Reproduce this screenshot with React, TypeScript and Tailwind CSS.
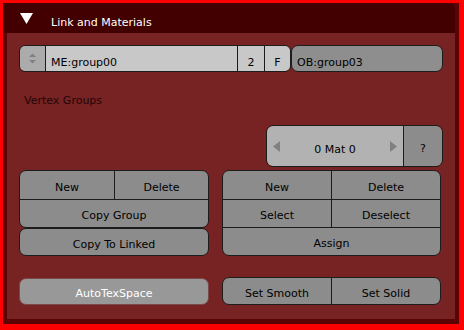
import React from "react";

const font = { fontFamily: '"DejaVu Sans", Verdana, sans-serif' };

function Cell({ children, className = "" }: { children?: React.ReactNode; className?: string }) {
  return (
    <div className={`flex items-center justify-center pt-[6px] text-[11px] text-black ${className}`}>
      {children}
    </div>
  );
}

export default function App() {
  return (
    <div
      className="w-[464px] h-[330px] bg-[#5c0303] border-t-[3px] border-l-[3px] border-r-[5px] border-b-[6px] border-[#ff0000] flex flex-col overflow-hidden"
      style={font}
    >
      {/* Header */}
      <div className="h-[30px] shrink-0 mr-[4px] bg-[#420000] rounded-tr-[6px] flex items-center">
        <svg className="ml-[17px] w-[13px] h-[12px]" viewBox="0 0 13 12">
          <polygon points="0,1 13,1 6.5,12" fill="#ffffff" />
        </svg>
        <span className="ml-[18px] pt-[11px] text-[11px] text-white">Link and Materials</span>
      </div>

      {/* Body */}
      <div className="flex-1 mx-[4px] bg-[#772323] flex flex-col pl-[12px] pt-[12px]">
        {/* Row 1 */}
        <div className="flex h-[27px]">
          <div className="flex h-full border border-[#1c1c1c] rounded-[6px] overflow-hidden">
            <div className="w-[25px] bg-[#ababab] flex items-center justify-center">
              <svg className="w-[9px] h-[11px]" viewBox="0 0 9 11">
                <polygon points="1,4 8,4 4.5,0.5" fill="#808080" />
                <polygon points="1,7 8,7 4.5,10.5" fill="#808080" />
              </svg>
            </div>
            <div className="w-[192px] bg-[#c8c8c8] border-l border-[#1c1c1c] flex items-center pl-[5px] pt-[10px] text-[11px] text-black">
              ME:group00
            </div>
            <Cell className="w-[27px] bg-[#c8c8c8] border-l border-[#1c1c1c] !pt-[10px]">2</Cell>
            <Cell className="w-[26px] bg-[#c8c8c8] border-l border-[#1c1c1c] !pt-[10px]">F</Cell>
          </div>
          <div className="w-[152px] h-full bg-[#8e8e8e] border border-[#1c1c1c] rounded-[7px] flex items-center pl-[5px] pt-[10px] text-[11px] text-black">
            OB:group03
          </div>
        </div>

        {/* Vertex Groups label */}
        <div className="mt-[22px] ml-[5px] h-[14px] leading-[14px] text-[11px] text-[#220606]">Vertex Groups</div>

        {/* Mat row */}
        <div className="mt-[17px] ml-[247px] w-[177px] h-[42px] flex border border-[#1c1c1c] rounded-[7px] overflow-hidden">
          <div className="w-[136px] bg-[#b2b2b2] flex items-center justify-between px-[6px]">
            <svg className="w-[7px] h-[11px]" viewBox="0 0 7 11">
              <polygon points="7,0 7,11 0,5.5" fill="#808080" />
            </svg>
            <span className="pt-[8px] text-[11px] text-black">0 Mat 0</span>
            <svg className="w-[7px] h-[11px]" viewBox="0 0 7 11">
              <polygon points="0,0 0,11 7,5.5" fill="#808080" />
            </svg>
          </div>
          <Cell className="flex-1 bg-[#8c8c8c] border-l border-[#1c1c1c]">?</Cell>
        </div>

        {/* Button blocks */}
        <div className="mt-[3px] flex gap-[13px]">
          <div className="w-[190px] flex flex-col">
            <div className="border border-[#1c1c1c] rounded-[7px] overflow-hidden bg-[#8c8c8c]">
              <div className="flex h-[28px]">
                <Cell className="w-[94px]">New</Cell>
                <Cell className="flex-1 border-l border-[#1c1c1c]">Delete</Cell>
              </div>
              <Cell className="h-[28px] border-t border-[#1c1c1c]">Copy Group</Cell>
            </div>
            <Cell className="h-[28px] border border-[#1c1c1c] rounded-[7px] bg-[#8c8c8c]">Copy To Linked</Cell>
          </div>
          <div className="w-[219px] border border-[#1c1c1c] rounded-[7px] overflow-hidden bg-[#8c8c8c]">
            <div className="flex h-[28px]">
              <Cell className="w-[108px]">New</Cell>
              <Cell className="flex-1 border-l border-[#1c1c1c]">Delete</Cell>
            </div>
            <div className="flex h-[28px] border-t border-[#1c1c1c]">
              <Cell className="w-[108px]">Select</Cell>
              <Cell className="flex-1 border-l border-[#1c1c1c]">Deselect</Cell>
            </div>
            <Cell className="h-[27px] border-t border-[#1c1c1c]">Assign</Cell>
          </div>
        </div>

        {/* Bottom row */}
        <div className="mt-[21px] flex gap-[13px]">
          <div className="w-[190px] h-[27px] mt-[1px] bg-[#989898] border border-[#7a4a4a] rounded-[7px] flex items-center justify-center pt-[6px] text-[11px] text-white">
            AutoTexSpace
          </div>
          <div className="w-[219px] h-[28px] flex border border-[#1c1c1c] rounded-[7px] overflow-hidden bg-[#8c8c8c]">
            <Cell className="w-[108px]">Set Smooth</Cell>
            <Cell className="flex-1 border-l border-[#1c1c1c]">Set Solid</Cell>
          </div>
        </div>
      </div>
      <div className="h-[5px] shrink-0" />
    </div>
  );
}
